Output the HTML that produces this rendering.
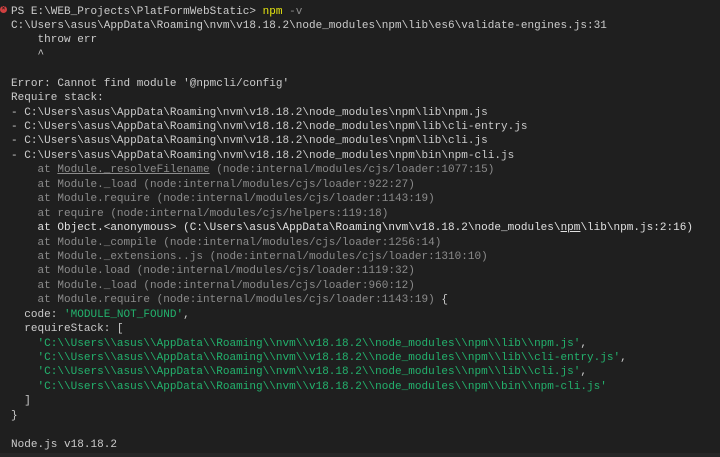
<!DOCTYPE html>
<html><head><meta charset="utf-8"><style>
html,body{margin:0;padding:0;background:#1f1f1f;width:720px;height:457px;overflow:hidden}
pre{margin:0;position:absolute;left:11px;top:4.5px;font-family:"Liberation Mono",monospace;font-size:11px;line-height:14.43px;color:#cccccc;white-space:pre;letter-spacing:0.02px}
.g{color:#8c8c8c}.w{color:#e0e0e0}.gr{color:#23b26d}.y{color:#e5e510}.u{text-decoration:underline}
.dot{position:absolute;left:0;top:6px;width:7px;height:7px;border-radius:50%;background:#d04040;color:#1f1f1f;font:bold 6px/7px "Liberation Sans",sans-serif;text-align:center}
.bot{position:absolute;left:0;top:453px;width:720px;height:4px;background:#262626}
</style></head><body>
<div class="dot">×</div>
<pre>PS E:\WEB_Projects\PlatFormWebStatic&gt; <span class="y">npm</span> <span class="g">-v</span>
C:\Users\asus\AppData\Roaming\nvm\v18.18.2\node_modules\npm\lib\es6\validate-engines.js:31
    throw err
    ^

Error: Cannot find module '@npmcli/config'
Require stack:
- C:\Users\asus\AppData\Roaming\nvm\v18.18.2\node_modules\npm\lib\npm.js
- C:\Users\asus\AppData\Roaming\nvm\v18.18.2\node_modules\npm\lib\cli-entry.js
- C:\Users\asus\AppData\Roaming\nvm\v18.18.2\node_modules\npm\lib\cli.js
- C:\Users\asus\AppData\Roaming\nvm\v18.18.2\node_modules\npm\bin\npm-cli.js
<span class="g">    at <span class="u">Module._resolveFilename</span> (node:internal/modules/cjs/loader:1077:15)
    at Module._load (node:internal/modules/cjs/loader:922:27)
    at Module.require (node:internal/modules/cjs/loader:1143:19)
    at require (node:internal/modules/cjs/helpers:119:18)</span>
<span class="w">    at Object.&lt;anonymous&gt; (C:\Users\asus\AppData\Roaming\nvm\v18.18.2\node_modules\<span class="u">npm</span>\lib\npm.js:2:16)</span>
<span class="g">    at Module._compile (node:internal/modules/cjs/loader:1256:14)
    at Module._extensions..js (node:internal/modules/cjs/loader:1310:10)
    at Module.load (node:internal/modules/cjs/loader:1119:32)
    at Module._load (node:internal/modules/cjs/loader:960:12)
    at Module.require (node:internal/modules/cjs/loader:1143:19)</span> {
  code: <span class="gr">'MODULE_NOT_FOUND'</span>,
  requireStack: [
<span class="gr">    'C:\\Users\\asus\\AppData\\Roaming\\nvm\\v18.18.2\\node_modules\\npm\\lib\\npm.js'</span>,
<span class="gr">    'C:\\Users\\asus\\AppData\\Roaming\\nvm\\v18.18.2\\node_modules\\npm\\lib\\cli-entry.js'</span>,
<span class="gr">    'C:\\Users\\asus\\AppData\\Roaming\\nvm\\v18.18.2\\node_modules\\npm\\lib\\cli.js'</span>,
<span class="gr">    'C:\\Users\\asus\\AppData\\Roaming\\nvm\\v18.18.2\\node_modules\\npm\\bin\\npm-cli.js'</span>
  ]
}

Node.js v18.18.2</pre>
<div class="bot"></div>
</body></html>
